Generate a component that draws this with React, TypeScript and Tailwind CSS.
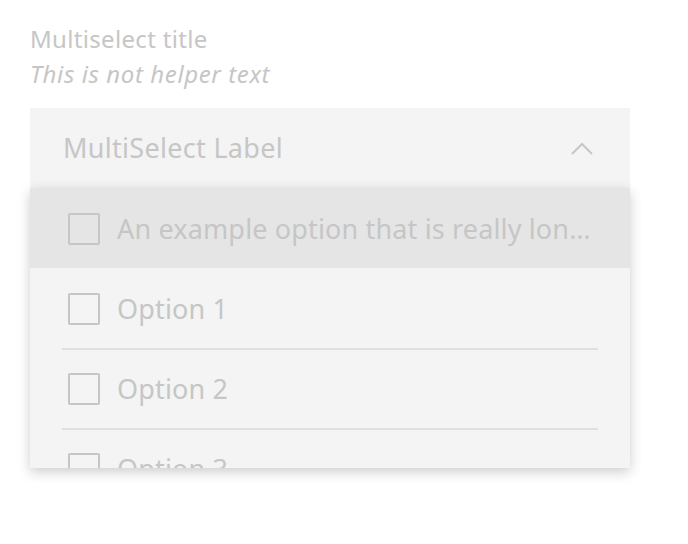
import React from "react";

const options = [
  "An example option that is really long to show what should be done to handle long text",
  "Option 1",
  "Option 2",
  "Option 3",
];

export default function App() {
  return (
    <div className="min-h-[544px] bg-white pl-[30px] pt-[23px] font-['Noto_Sans',sans-serif] text-[#c6c6c6]">
      <div className="text-[24px] leading-[32px] tracking-[0.32px]">Multiselect title</div>
      <div className="mt-[3px] text-[24px] leading-[32px] italic tracking-[0.6px]">This is not helper text</div>
      <div className="mt-[18px] w-[600px]">
        <div className="flex h-[80px] items-center justify-between bg-[#f4f4f4] pl-[33px] pr-[37px]">
          <span className="text-[27px] tracking-[0.3px]">MultiSelect Label</span>
          <svg width="22" height="13" viewBox="0 0 22 13" fill="none">
            <path d="M1 12 L11 2 L21 12" stroke="#c6c6c6" strokeWidth="2" />
          </svg>
        </div>
        <div className="h-[280px] overflow-hidden bg-[#f4f4f4] shadow-[0_4px_12px_rgba(0,0,0,0.2)]">
          {options.map((o, i) => (
            <div key={i} className={i === 0 ? "h-[80px] bg-[#e5e5e5] px-[32px]" : "h-[80px] px-[32px]"}>
              <div
                className={
                  i >= 2
                    ? "flex h-full items-center border-t-2 border-[#e0e0e0]"
                    : "flex h-full items-center border-t-2 border-transparent"
                }
              >
                <div className="ml-[6px] h-[32px] w-[32px] shrink-0 rounded-[2px] border-2 border-[#c6c6c6]" />
                <span className="ml-[17px] truncate text-[27px] tracking-[0.15px]">{o}</span>
              </div>
            </div>
          ))}
        </div>
      </div>
    </div>
  );
}
